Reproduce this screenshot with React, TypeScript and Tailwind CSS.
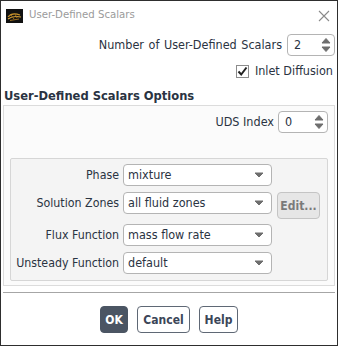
import { useState } from "react";

const font = "font-['DejaVu_Sans_Condensed','DejaVu_Sans',sans-serif]";

function SpinArrows() {
  return (
    <svg width="10" height="16" viewBox="0 0 10 16" className="shrink-0">
      <path d="M1 6 L5 1.5 L9 6 Z" fill="#6e6e6e" stroke="#6e6e6e" strokeWidth="1" strokeLinejoin="round" />
      <path d="M1 10 L5 14.5 L9 10 Z" fill="#6e6e6e" stroke="#6e6e6e" strokeWidth="1" strokeLinejoin="round" />
    </svg>
  );
}

function Spinner({ value, width }: { value: string; width: string }) {
  return (
    <div
      className={`${width} h-[22px] border border-[#b4b4b4] rounded-[4px] bg-white flex items-center justify-between pl-[6px] pr-[3px]`}
    >
      <span className="text-[12.5px] text-[#2a3342]">{value}</span>
      <SpinArrows />
    </div>
  );
}

function Caret() {
  return (
    <svg width="10" height="6" viewBox="0 0 10 6" className="shrink-0">
      <path d="M1 1 L9 1 L5 5 Z" fill="#6e6e6e" stroke="#6e6e6e" strokeWidth="1" strokeLinejoin="round" />
    </svg>
  );
}

function Dropdown({ value }: { value: string }) {
  return (
    <div className="w-[149px] h-[22px] border border-[#b4b4b4] rounded-[4px] bg-white flex items-center justify-between pl-[4px] pr-[7px]">
      <span className="text-[12.5px] text-[#2a3342]">{value}</span>
      <Caret />
    </div>
  );
}

function Row({ label, value, extra, cls }: { label: string; value: string; extra?: boolean; cls: string }) {
  return (
    <div className={`flex items-start ${cls}`}>
      <div className="w-[108px] h-[22px] flex items-center justify-end text-[12.3px] text-[#2a3342] whitespace-nowrap">
        {label}
      </div>
      <div className="ml-[4px]">
        <Dropdown value={value} />
      </div>
      {extra && (
        <div className="ml-[5px] w-[43px] h-[27px] border border-[#c4c4c4] rounded-[4px] bg-[#e6e6e6] flex items-center justify-center text-[12px] font-bold text-[#7a7a7a]">
          Edit...
        </div>
      )}
    </div>
  );
}

export default function App() {
  const [inlet, setInlet] = useState(true);

  return (
    <div className={`w-[338px] h-[346px] border border-[#2e2e2e] bg-white flex flex-col ${font}`}>
      {/* Title bar */}
      <div className="h-[29px] flex items-center pl-[5px] pr-[7px]">
        <svg width="17" height="14" viewBox="0 0 17 14" className="shrink-0">
          <rect width="17" height="14" fill="#111" />
          <path d="M2 8 C5 4, 9 4, 14 6" stroke="#c9932b" strokeWidth="1.2" fill="none" />
          <path d="M2 10 C6 7, 10 7, 15 8" stroke="#e0a93a" strokeWidth="1.2" fill="none" />
          <path d="M4 11.5 L13 10 M5 6 L8 10 M9 5 L11 9" stroke="#a9771f" strokeWidth="0.9" fill="none" />
        </svg>
        <span className="ml-[6px] text-[11.3px] text-[#9b9b9b]">User-Defined Scalars</span>
        <svg width="12" height="12" viewBox="0 0 12 12" className="ml-auto">
          <path d="M1 1 L11 11 M11 1 L1 11" stroke="#8a8a8a" strokeWidth="1.1" />
        </svg>
      </div>

      {/* Number of UDS */}
      <div className="mt-[4px] flex items-center justify-end pr-[2px]">
        <span className="text-[12.5px] text-[#2a3342] mr-[5px] [word-spacing:1px]">
          Number of User-Defined Scalars
        </span>
        <Spinner value="2" width="w-[48px]" />
      </div>

      {/* Inlet diffusion */}
      <label className="mt-[9px] flex items-center justify-end pr-[4px] h-[13px]">
        <button
          type="button"
          onClick={() => setInlet(!inlet)}
          className="w-[13px] h-[13px] border border-[#8c8c8c] bg-white flex items-center justify-center"
        >
          {inlet && (
            <svg width="11" height="11" viewBox="0 0 11 11">
              <path d="M1.5 5.5 L4.2 8.5 L9.5 1.5" stroke="#222" strokeWidth="2" fill="none" />
            </svg>
          )}
        </button>
        <span className="ml-[6px] text-[12.5px] text-[#2a3342]">Inlet Diffusion</span>
      </label>

      {/* Group header */}
      <div className="mt-[9px] h-[18px] flex items-center pl-[3px] text-[12.8px] font-bold text-[#2a3342]">
        User-Defined Scalars Options
      </div>

      {/* Group box */}
      <div className="mx-[2px] h-[181px] border border-[#dcdcdc] bg-[#fbfbfb] flex flex-col">
        <div className="mt-[5px] flex items-center justify-end pr-[6px]">
          <span className="text-[12.5px] text-[#2a3342] mr-[4px]">UDS Index</span>
          <Spinner value="0" width="w-[50px]" />
        </div>

        <div className="mt-[25px] mx-[6px] h-[123px] border border-[#d6d6d6] rounded-[2px] bg-[#f4f4f4] flex flex-col">
          <Row label="Phase" value="mixture" cls="mt-[5px]" />
          <Row label="Solution Zones" value="all fluid zones" extra cls="mt-[6px]" />
          <Row label="Flux Function" value="mass flow rate" cls="mt-[5px]" />
          <Row label="Unsteady Function" value="default" cls="mt-[6px]" />
        </div>
      </div>

      {/* Separator */}
      <div className="mt-[6px] mx-[2px] h-px bg-[#a6a6a6]" />

      {/* Buttons */}
      <div className="mt-[13px] flex justify-center gap-[9px]">
        <button className="w-[28px] h-[27px] rounded-[4px] bg-[#4b5563] border border-[#4b5563] text-white text-[12px] font-bold">
          OK
        </button>
        <button className="w-[53px] h-[27px] rounded-[4px] bg-white border border-[#5f6875] text-[#3b4658] text-[12px] font-bold">
          Cancel
        </button>
        <button className="w-[39px] h-[27px] rounded-[4px] bg-white border border-[#5f6875] text-[#3b4658] text-[12px] font-bold">
          Help
        </button>
      </div>
    </div>
  );
}
